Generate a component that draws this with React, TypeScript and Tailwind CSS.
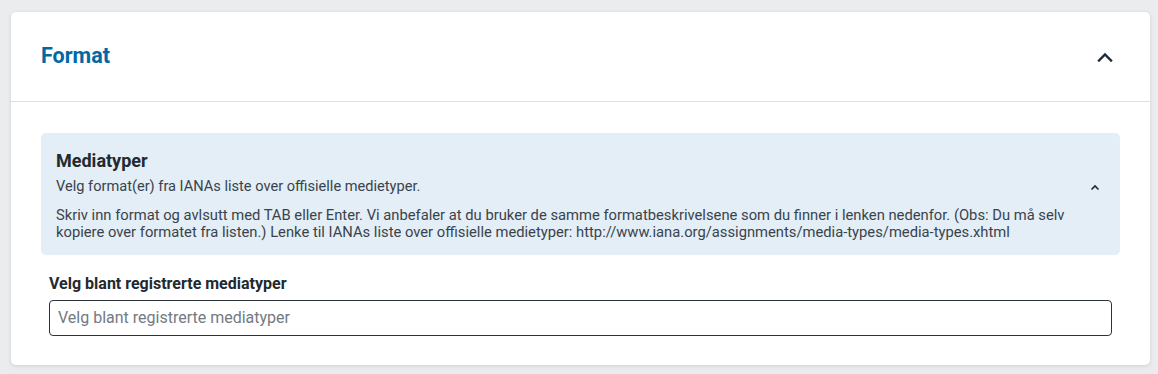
import React from "react";

export default function App() {
  return (
    <div className="min-h-[374px] bg-[#ebeced] pt-[12px] pl-[11px] pr-[8px] pb-[10px]" style={{ fontFamily: "Roboto, 'Liberation Sans', sans-serif" }}>
      <div className="bg-white rounded-[5px] shadow-[0_1px_4px_rgba(0,0,0,0.12)]">
        <div className="h-[90px] flex items-center justify-between pl-[30px] pr-[37px] border-b border-[#dedfe0]">
          <h2 className="text-[21.5px] font-bold text-[#0069a5] leading-none -mt-[2px]">Format</h2>
          <svg width="16" height="10" viewBox="0 0 16 10" fill="none">
            <path d="M2 8.5 L8 2.5 L14 8.5" stroke="#1f2a37" strokeWidth="2.4" strokeLinecap="square" />
          </svg>
        </div>
        <div className="pt-[31px] px-[30px] pb-[29px]">
          <div className="bg-[#e3eef6] rounded-[5px] pt-[17px] pb-[14px] pl-[15px] pr-[20px] text-[#2d3640]">
            <div className="text-[18px] font-bold leading-[22px] text-[#22292f]">Mediatyper</div>
            <div className="flex items-center justify-between mt-[4px]">
              <div className="text-[14.6px] leading-[20px] text-[#3a434c]">Velg format(er) fra IANAs liste over offisielle medietyper.</div>
              <svg width="10" height="7" viewBox="0 0 10 7" fill="none" className="mt-[2px]">
                <path d="M1.5 5.5 L5 2 L8.5 5.5" stroke="#1f2a37" strokeWidth="1.6" />
              </svg>
            </div>
            <p className="text-[14.75px] leading-[17px] text-[#3a434c] mt-[11px] pr-[20px]">
              Skriv inn format og avlsutt med TAB eller Enter. Vi anbefaler at du bruker de samme formatbeskrivelsene som du finner i lenken nedenfor. (Obs: Du må selv kopiere over formatet fra listen.) Lenke til IANAs liste over offisielle medietyper: http://www.iana.org/assignments/media-types/media-types.xhtml
            </p>
          </div>
          <div className="px-[8px] mt-[19px]">
            <label className="block text-[16px] font-bold leading-[20px] text-[#22292f]">Velg blant registrerte mediatyper</label>
            <div className="mt-[6px] h-[36px] border border-[#2b333b] rounded-[4px] flex items-center pl-[8px] text-[16px] text-[#737a82]">
              Velg blant registrerte mediatyper
            </div>
          </div>
        </div>
      </div>
    </div>
  );
}
